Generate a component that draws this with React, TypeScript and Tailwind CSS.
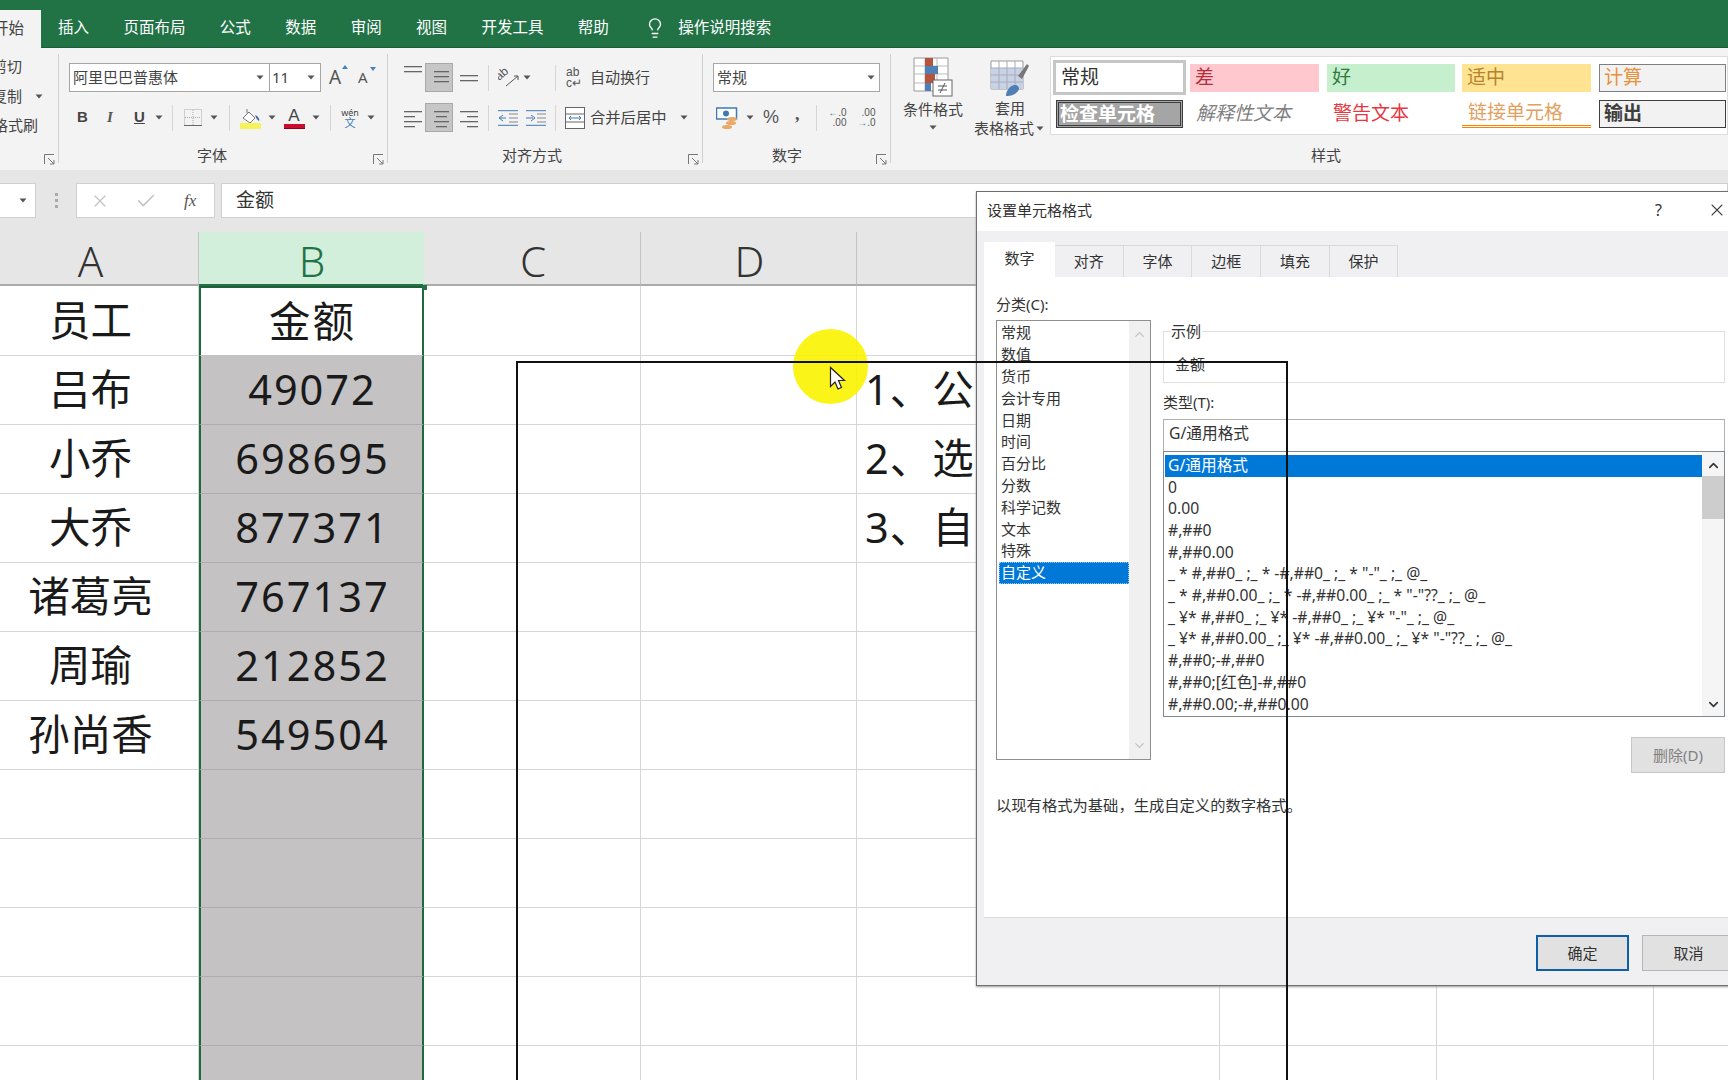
import React from 'react';
import { Lightbulb, ChevronUp, ChevronDown, X, Check } from 'lucide-react';

const TABS = ['插入', '页面布局', '公式', '数据', '审阅', '视图', '开发工具', '帮助'];
const CATEGORIES = ['常规', '数值', '货币', '会计专用', '日期', '时间', '百分比', '分数', '科学记数', '文本', '特殊', '自定义'];
const FORMATS = [
  'G/通用格式',
  '0',
  '0.00',
  '#,##0',
  '#,##0.00',
  '_ * #,##0_ ;_ * -#,##0_ ;_ * "-"_ ;_ @_',
  '_ * #,##0.00_ ;_ * -#,##0.00_ ;_ * "-"??_ ;_ @_',
  '_ ¥* #,##0_ ;_ ¥* -#,##0_ ;_ ¥* "-"_ ;_ @_',
  '_ ¥* #,##0.00_ ;_ ¥* -#,##0.00_ ;_ ¥* "-"??_ ;_ @_',
  '#,##0;-#,##0',
  '#,##0;[红色]-#,##0',
  '#,##0.00;-#,##0.00',
];
const DIALOG_TABS = ['对齐', '字体', '边框', '填充', '保护'];
const ROWS = [
  ['员工', '金额', ''],
  ['吕布', '49072', '1、公'],
  ['小乔', '698695', '2、选'],
  ['大乔', '877371', '3、自'],
  ['诸葛亮', '767137', ''],
  ['周瑜', '212852', ''],
  ['孙尚香', '549504', ''],
  ['', '', ''],
  ['', '', ''],
  ['', '', ''],
  ['', '', ''],
  ['', '', ''],
];

function Caret({ className = '' }: { className?: string }) {
  return (
    <svg width="8" height="5" viewBox="0 0 8 5" className={className}>
      <path d="M0.5 0.5h7L4 4.5z" fill="#555" />
    </svg>
  );
}

function Launcher() {
  return (
    <svg width="11" height="11" viewBox="0 0 11 11" className="absolute right-[3px] bottom-[5px]">
      <path d="M0.5 10V0.5H10M4 4l6 6M10 6v4H6" fill="none" stroke="#777" />
    </svg>
  );
}

function Sep({ h = 'h-[26px]' }: { h?: string }) {
  return <div className={`w-px bg-[#d6d6d6] ${h}`} />;
}

function Lines({ rows, y = 0 }: { rows: [number, number][]; y?: number }) {
  return (
    <svg width="20" height="20" viewBox="0 0 20 20">
      {rows.map((r, i) => (
        <rect key={i} x={r[0]} y={3 + y + i * 5} width={r[1] - r[0]} height="1.3" fill="#666" />
      ))}
    </svg>
  );
}

function AlignBox({ rows, active, y = 0 }: { rows: [number, number][]; active?: boolean; y?: number }) {
  return (
    <div className={active ? 'w-[28px] h-[29px] bg-[#c6c6c6] border border-[#a8a8a8] flex items-center justify-center' : 'w-[20px] h-[29px] flex items-center justify-center'}>
      <Lines rows={rows} y={y} />
    </div>
  );
}

function FontGroup() {
  return (
    <div className="relative w-[328px] h-full pt-[15px] pl-[10px]">
      <div className="flex items-center h-[29px]">
        <div className="w-[201px] h-[29px] bg-white border border-[#a6a6a6] flex items-center justify-between pl-[3px] pr-[5px] text-[15px]">
          <span>阿里巴巴普惠体</span>
          <Caret />
        </div>
        <div className="w-[51px] h-[29px] bg-white border border-l-0 border-[#a6a6a6] flex items-center justify-between pl-[2px] pr-[5px] text-[15px]">
          <span>11</span>
          <Caret />
        </div>
        <div className="ml-[8px] relative w-[20px] text-[19px] leading-none text-[#555]">
          A<span className="absolute left-[13px] -top-[3px] w-0 h-0 border-x-[3px] border-x-transparent border-b-[4px] border-b-[#4a7ebb]" />
        </div>
        <div className="ml-[9px] relative w-[20px] text-[15px] leading-none text-[#555]">
          A<span className="absolute left-[12px] -top-[3px] w-0 h-0 border-x-[3px] border-x-transparent border-t-[4px] border-t-[#4a7ebb]" />
        </div>
      </div>
      <div className="flex items-center h-[29px] mt-[11px] pl-[8px]">
        <span className="w-[30px] text-[15px] font-bold text-[#444] [font-family:'Liberation_Sans',sans-serif]">B</span>
        <span className="w-[27px] text-[15px] italic font-bold text-[#555] [font-family:'Liberation_Serif',serif]">I</span>
        <span className="w-[21px] text-[15px] font-bold underline text-[#444] [font-family:'Liberation_Sans',sans-serif]">U</span>
        <Caret />
        <div className="ml-[9px] mr-[11px]"><Sep /></div>
        <svg width="18" height="18" viewBox="0 0 18 18">
          <rect x="0.5" y="0.5" width="17" height="16" fill="none" stroke="#aaa" strokeDasharray="1 1" />
          <path d="M9 1v15M1 8.500h16" stroke="#aaa" strokeDasharray="1 1" />
          <path d="M0 16.500h18" stroke="#666" />
        </svg>
        <Caret className="ml-[8px]" />
        <div className="ml-[11px] mr-[10px]"><Sep /></div>
        <svg width="22" height="22" viewBox="0 0 22 22">
          <path d="M7 2v4M3 11l6-6 6 6-5 5z" fill="#fff" stroke="#777" />
          <path d="M15 8c3 1 5 4 4 6-2-1-3-3-4-6z" fill="#3f6fa8" />
          <rect x="0" y="16" width="21" height="6" fill="#f5f25a" />
        </svg>
        <Caret className="ml-[6px]" />
        <div className="ml-[7px] w-[22px] flex flex-col items-center">
          <span className="text-[17px] leading-[17px] text-[#444] [font-family:'Liberation_Sans',sans-serif]">A</span>
          <span className="w-[21px] h-[5px] bg-[#c8102e] border-b border-[#90001a]" />
        </div>
        <Caret className="ml-[7px]" />
        <div className="ml-[10px] mr-[8px]"><Sep /></div>
        <div className="w-[22px] flex flex-col items-center leading-none">
          <span className="text-[9px] text-[#444]">wén</span>
          <span className="text-[11px] text-[#3f79b5]">文</span>
        </div>
        <Caret className="ml-[6px]" />
      </div>
      <div className="absolute left-0 right-0 top-[96px] text-center text-[15px] pr-[22px]">字体</div>
      <Launcher />
    </div>
  );
}

function AlignGroup() {
  return (
    <div className="relative w-[314px] h-full pt-[15px] pl-[15px]">
      <div className="flex items-center h-[29px]">
        <div className="w-[20px] h-[29px] flex items-center -mt-[9px]"><Lines rows={[[1, 19], [1, 19]]} /></div>
        <div className="ml-[2px]"><AlignBox active rows={[[5, 20], [5, 20], [5, 20]]} /></div>
        <div className="ml-[6px] mt-[9px]"><Lines rows={[[1, 19], [1, 19]]} /></div>
        <div className="ml-[9px]"><Sep /></div>
        <svg width="22" height="22" viewBox="0 0 22 22" className="ml-[9px]">
          <text x="1" y="14" fontSize="12" fontFamily="Liberation Sans" fill="#555" transform="rotate(-40 1 14)">ab</text>
          <path d="M8 19L20 9M16 9h4v4" fill="none" stroke="#555" />
        </svg>
        <Caret className="ml-[3px]" />
        <div className="ml-[24px]"><Sep /></div>
        <span className="ml-[10px] w-[18px] flex flex-col text-[12px] leading-[11px] text-[#555] [font-family:'Liberation_Sans',sans-serif]">
          <span>ab</span>
          <span>c↵</span>
        </span>
        <span className="ml-[6px] text-[15px]">自动换行</span>
      </div>
      <div className="flex items-center h-[29px] mt-[11px]">
        <Lines rows={[[1, 19], [1, 12], [1, 19], [1, 12]]} />
        <div className="ml-[2px]"><AlignBox active rows={[[5, 20], [7, 18], [5, 20], [7, 18]]} /></div>
        <div className="ml-[6px]"><Lines rows={[[1, 19], [8, 19], [1, 19], [8, 19]]} /></div>
        <div className="ml-[9px]"><Sep /></div>
        <svg width="20" height="16" viewBox="0 0 20 16" className="ml-[9px]">
          <path d="M0 0.700h20M0 15.300h20" stroke="#3f79b5" />
          <path d="M1 8h7M5 5L1 8l4 3" fill="none" stroke="#3f79b5" />
          <path d="M11 4h9M11 8h9M11 12h9" stroke="#888" />
        </svg>
        <svg width="20" height="16" viewBox="0 0 20 16" className="ml-[8px]">
          <path d="M0 0.700h20M0 15.300h20" stroke="#3f79b5" />
          <path d="M0 8h7M5 5l4 3-4 3" fill="none" stroke="#3f79b5" />
          <path d="M11 4h9M11 8h9M11 12h9" stroke="#888" />
        </svg>
        <div className="ml-[9px]"><Sep /></div>
        <svg width="20" height="22" viewBox="0 0 20 22" className="ml-[9px]">
          <rect x="0.500" y="0.500" width="19" height="21" fill="#fff" stroke="#666" />
          <path d="M0 7h20M0 15h20" stroke="#666" />
          <path d="M4 11h12M6 9l-2 2 2 2M14 9l2 2-2 2" fill="none" stroke="#3f79b5" />
        </svg>
        <span className="ml-[5px] text-[15.300px]">合并后居中</span>
        <Caret className="ml-[13px]" />
      </div>
      <div className="absolute left-[114px] top-[96px] text-[15px]">对齐方式</div>
      <Launcher />
    </div>
  );
}

function NumberGroup() {
  return (
    <div className="relative w-[187px] h-full pt-[15px] pl-[10px]">
      <div className="w-[167px] h-[29px] bg-white border border-[#a6a6a6] flex items-center justify-between pl-[3px] pr-[4px] text-[15px]">
        <span>常规</span>
        <Caret />
      </div>
      <div className="flex items-center h-[29px] mt-[11px] pl-[3px]">
        <svg width="23" height="22" viewBox="0 0 23 22">
          <rect x="0.500" y="1" width="20" height="11" fill="#fff" stroke="#3f79b5" strokeWidth="1.500" />
          <circle cx="10" cy="6.500" r="3" fill="#3f79b5" />
          <ellipse cx="16" cy="12" rx="5" ry="2" fill="#e8a867" />
          <ellipse cx="15" cy="16" rx="5" ry="2" fill="#e8a867" />
          <ellipse cx="11" cy="20" rx="5" ry="2" fill="#e8a867" />
        </svg>
        <Caret className="ml-[7px]" />
        <span className="ml-[9px] w-[17px] text-[18px] text-[#555] [font-family:'Liberation_Sans',sans-serif]">%</span>
        <span className="ml-[15px] text-[18px] font-bold text-[#555] -mt-[6px] [font-family:'Liberation_Serif',serif]">,</span>
        <div className="ml-[16px]"><Sep /></div>
        <div className="ml-[9px] w-[21px] flex flex-col items-end text-[10px] leading-[10px] text-[#555] [font-family:'Liberation_Sans',sans-serif]">
          <span><span className="text-[#3f79b5]">←</span>.0</span>
          <span>.00</span>
        </div>
        <div className="ml-[8px] w-[21px] flex flex-col items-end text-[10px] leading-[10px] text-[#555] [font-family:'Liberation_Sans',sans-serif]">
          <span>.00</span>
          <span><span className="text-[#3f79b5]">→</span>.0</span>
        </div>
      </div>
      <div className="absolute left-[69px] top-[96px] text-[15px]">数字</div>
      <Launcher />
    </div>
  );
}

function CondIcon() {
  return (
    <svg width="40" height="40" viewBox="0 0 40 40">
      <path d="M1 1h34v33H1z" fill="#fff" stroke="#999" />
      <path d="M12 1v33M24 1v33M1 9h34M1 17h34M1 26h34" stroke="#bbb" />
      <rect x="12" y="1" width="8" height="8" fill="#b5533c" />
      <rect x="12" y="9" width="13" height="8" fill="#4f7fb5" />
      <rect x="12" y="17" width="10" height="9" fill="#b5533c" />
      <rect x="12" y="26" width="6" height="8" fill="#4f7fb5" />
      <rect x="20" y="23" width="19" height="16" fill="#fff" stroke="#666" />
      <path d="M25 29h9M25 33h9M32 26l-5 10" stroke="#555" />
    </svg>
  );
}

function TableIcon() {
  return (
    <svg width="40" height="38" viewBox="0 0 40 38">
      <path d="M1 1h32v28H1z" fill="#fff" stroke="#999" />
      <path d="M1 8h32v21H1z" fill="#c7d3e4" />
      <path d="M9 1v28M17 1v28M25 1v28M1 8h32M1 15h32M1 22h32" stroke="#aab" />
      <path d="M28 16l9-12 2 2-7 13z" fill="#777" />
      <path d="M16 36c0-6 5-12 10-11 3 1 4 4 2 6-3 4-7 5-12 5z" fill="#4f7fb5" />
    </svg>
  );
}

function StylesGallery() {
  return (
    <div className="w-[678px] h-[79px] bg-white border border-[#dcdcdc] grid grid-cols-[132px_136px_136px_136px_128px] grid-rows-[38px_38px] text-[19px] leading-none pl-[2px]">
      <div className="h-[35px] mt-[3px] w-[133px] border-[3px] border-[#c6c6c6] flex items-center pl-[5px] text-[#333]">常规</div>
      <div className="ml-[5px] w-[129px] h-[28px] mt-[7px] bg-[#ffc7ce] text-[#b2303c] flex items-center pl-[5px] pb-[1px]">差</div>
      <div className="w-[128px] ml-[6px] h-[28px] mt-[7px] bg-[#c6efce] text-[#2f7a3d] flex items-center pl-[5px] pb-[1px]">好</div>
      <div className="w-[129px] ml-[5px] h-[28px] mt-[7px] bg-[#fde392] text-[#b5842c] flex items-center pl-[5px] pb-[1px]">适中</div>
      <div className="w-[127px] ml-[6px] h-[28px] mt-[7px] bg-[#f2f2f2] border border-[#7f7f7f] text-[#e8903a] flex items-center pl-[4px] pb-[1px]">计算</div>
      <div className="ml-[3px] w-[127px] h-[28px] mt-[5px] bg-[#a5a5a5] border-[3px] border-double border-[#3f3f3f] text-white font-bold flex items-center pl-[1px]">检查单元格</div>
      <div className="ml-[5px] mt-[5px] h-[28px] flex items-center pl-[6px] italic text-[#7f7f7f] pb-[1px]">解释性文本</div>
      <div className="ml-[6px] mt-[5px] h-[28px] flex items-center pl-[6px] text-[#e8383f] pb-[1px]">警告文本</div>
      <div className="w-[129px] ml-[5px] mt-[5px] h-[28px] border-b-[3px] border-double border-[#ff8001] flex items-center pl-[6px] text-[#e2a060]">链接单元格</div>
      <div className="w-[127px] ml-[6px] mt-[5px] h-[28px] bg-[#f2f2f2] border border-[#3f3f3f] text-[#3f3f3f] font-bold flex items-center pl-[4px] pb-[1px]">输出</div>
    </div>
  );
}

function Ribbon() {
  return (
    <div className="h-[122px] bg-[#f3f3f3] flex items-start text-[#444] overflow-hidden">
      <div className="relative w-[58px] h-full pt-[4px] text-[15px] leading-[29.500px] overflow-hidden">
        <div className="-ml-[8px]">剪切</div>
        <div className="-ml-[8px] flex items-center"><span>复制</span><Caret className="ml-[13px]" /></div>
        <div className="-ml-[7px]">格式刷</div>
        <Launcher />
      </div>
      <div className="w-px h-[109px] mt-[6px] bg-[#d0d0d0]" />
      <FontGroup />
      <div className="w-px h-[109px] mt-[6px] bg-[#d0d0d0]" />
      <AlignGroup />
      <div className="w-px h-[109px] mt-[6px] bg-[#d0d0d0]" />
      <NumberGroup />
      <div className="w-px h-[109px] mt-[6px] bg-[#d0d0d0]" />
      <div className="relative w-[159px] h-full flex text-[15px] leading-[20px]">
        <div className="w-[84px] pt-[9px] flex flex-col items-center">
          <CondIcon />
          <span className="mt-[2px]">条件格式</span>
          <Caret className="mt-[6px]" />
        </div>
        <div className="w-[70px] pt-[12px] flex flex-col items-center">
          <TableIcon />
          <span className="">套用</span>
          <span className="whitespace-nowrap flex items-center -ml-[2px]">表格格式<Caret className="ml-[2px]" /></span>
        </div>
      </div>
      <div className="flex flex-col items-center mt-[8px]">
        <StylesGallery />
        <span className="mt-[9px] text-[15px] pr-[126px]">样式</span>
      </div>
    </div>
  );
}

function FormulaBar() {
  return (
    <div className="bg-[#e6e6e6] pt-[13px] pb-[14px] flex items-stretch h-[62px]">
      <div className="w-[36px] bg-white border border-l-0 border-[#cfcfcf] flex items-center justify-end pr-[8px]"><Caret /></div>
      <div className="w-[40px] flex flex-col items-center justify-center gap-[3px]">
        <span className="w-[3px] h-[3px] bg-[#aaa]" />
        <span className="w-[3px] h-[3px] bg-[#aaa]" />
        <span className="w-[3px] h-[3px] bg-[#aaa]" />
      </div>
      <div className="w-[139px] bg-white border border-[#cfcfcf] flex items-center pl-[13px]">
        <X size={20} strokeWidth={1.5} className="text-[#c4c4c4]" />
        <Check size={22} strokeWidth={1.8} className="ml-[25px] text-[#c4c4c4]" />
        <span className="ml-[27px] text-[17px] italic text-[#555] [font-family:'Liberation_Serif',serif]">fx</span>
      </div>
      <div className="ml-[6px] flex-1 bg-white border border-[#cfcfcf] flex items-center pl-[14px] text-[19px] text-[#333]">金额</div>
    </div>
  );
}

function ColHeader({ w, label, active, pad }: { w: string; label: string; active?: boolean; pad?: string }) {
  return (
    <div className={`${w} ${pad ?? ''} h-[54px] flex items-center justify-center pt-[6px] text-[42px] leading-none font-light border-r border-b-2 ${active ? 'bg-[#d2efdc] text-[#217346] border-b-[#217346] border-r-[#d2efdc]' : 'text-[#333] border-b-[#ababab] border-r-[#c2c2c2]'}`}>
      {label}
    </div>
  );
}

function Sheet() {
  return (
    <div className="flex-1 min-h-0 bg-white overflow-hidden">
      <div className="flex bg-[#e6e6e6]">
        <ColHeader w="w-[199px]" pad="pr-[17px]" label="A" />
        <ColHeader w="w-[225px]" pad="pl-[2px]" label="B" active />
        <ColHeader w="w-[217px]" pad="pl-[2px]" label="C" />
        <ColHeader w="w-[216px]" pad="pl-[2px]" label="D" />
        <ColHeader w="w-[363px]" label="" />
        <ColHeader w="w-[217px]" label="" />
        <ColHeader w="w-[217px]" label="" />
        <ColHeader w="w-[74px]" label="" />
      </div>
      {ROWS.map((r, i) => (
        <div key={i} className={`flex text-[41.500px] text-[#1a1a1a] leading-none ${i === 0 ? 'h-[70px]' : 'h-[69px]'}`}>
          <div className="w-[199px] pr-[17px] border-r border-b border-[#d6d6d6] flex items-center justify-center whitespace-nowrap">{r[0]}</div>
          <div className={`w-[225px] pl-[2px] border-x-2 border-x-[#1d6a3f] flex items-center justify-center tracking-[2px] border-b ${i === 0 ? 'bg-white border-t-2 border-t-[#1f5f3a] border-b-[#c3c3c3]' : 'bg-[#c4c2c3] border-b-[#adadad]'}`}>{r[1]}</div>
          <div className="w-[217px] border-r border-b border-[#d6d6d6]" />
          <div className="w-[216px] border-r border-b border-[#d6d6d6]" />
          <div className="w-[363px] border-r border-b border-[#d6d6d6] flex items-center pl-[8px] whitespace-nowrap tracking-[1px]">{r[2]}</div>
          <div className="w-[217px] border-r border-b border-[#d6d6d6]" />
          <div className="w-[217px] border-r border-b border-[#d6d6d6]" />
          <div className="w-[74px] border-b border-[#d6d6d6]" />
        </div>
      ))}
    </div>
  );
}

function FormatDialog() {
  return (
    <div className="absolute left-[976px] top-[191px] w-[770px] h-[795px] bg-[#f0f0f2] border border-[#6f6f6f] shadow-[0_1px_2px_#999] text-[15px] leading-none text-[#333] flex flex-col">
      <div className="h-[39px] bg-white flex items-center pl-[10px] pb-[3px] relative">
        <span>设置单元格格式</span>
        <span className="absolute left-[678px] text-[16px]">?</span>
        <X size={20} strokeWidth={1.3} className="absolute left-[730px] text-[#444]" />
      </div>
      <div className="flex items-end h-[46px] pl-[7px]">
        <div className="w-[71px] h-[35px] bg-white flex items-center justify-center pb-[3px]">数字</div>
        {DIALOG_TABS.map(t => (
          <div key={t} className="w-[68.700px] h-[32px] bg-[#f0f0f2] border-t border-r border-[#d9d9d9] flex items-center justify-center">{t}</div>
        ))}
      </div>
      <div className="ml-[7px] h-[641px] bg-white border-b border-[#dcdcdc] pl-[12px]">
        <div className="flex">
          <div className="w-[155px]">
            <div className="h-[20px] mt-[17px] flex items-center">分类(C):</div>
            <div className="h-[440px] mt-[6px] border border-[#8f8f8f] flex">
              <div className="w-[132px] pl-[2px] pt-[1px]">
                {CATEGORIES.map(c => (
                  <div key={c} className={`h-[21.800px] flex items-center pl-[2px] ${c === '自定义' ? 'bg-[#0078d7] text-white outline-1 outline-dotted outline-[#9cc9ee] -outline-offset-1' : ''}`}>{c}</div>
                ))}
              </div>
              <div className="flex-1 bg-[#f0f0f0] flex flex-col justify-between items-center py-[6px] text-[#c2c2c2]">
                <ChevronUp size={15} />
                <ChevronDown size={15} />
              </div>
            </div>
          </div>
          <div className="ml-[12px] w-[562px]">
            <div className="relative h-[52px] mt-[54px] border border-[#dfdfdf] flex items-center pl-[11px]">
              <span className="absolute left-[7px] -top-[10px] bg-white pr-[1px] h-[18px] flex items-center">示例</span>
              <span className="mt-[14px]">金额</span>
            </div>
            <div className="h-[20px] mt-[9px] flex items-center">类型(T):</div>
            <div className="h-[32px] mt-[7px] border border-[#b0b0b0] border-b-0 flex items-center pl-[5px] pb-[3px] text-[15.700px]">G/通用格式</div>
            <div className="h-[266px] border border-[#828790] flex overflow-hidden">
              <div className="w-[538px] pl-[1px] pt-[3px] text-[15.700px]">
                {FORMATS.map((f, i) => (
                  <div key={f} className={`h-[21.700px] flex items-center pl-[3px] whitespace-pre ${i === 0 ? 'bg-[#0078d7] text-white' : ''}`}>{f}</div>
                ))}
              </div>
              <div className="flex-1 bg-[#f5f5f5] flex flex-col items-center text-[#333] pt-[6px]">
                <ChevronUp size={15} strokeWidth={2.5} />
                <div className="w-full h-[43px] bg-[#cdcdcd] mt-[3px]" />
                <ChevronDown size={15} strokeWidth={2.5} className="mt-auto mb-[4px]" />
              </div>
            </div>
            <div className="flex justify-end mt-[20px]">
              <div className="w-[94px] h-[36px] bg-[#e1e1e1] border border-[#c6c6c6] text-[#808080] flex items-center justify-center">删除(D)</div>
            </div>
          </div>
        </div>
        <div className="h-[20px] mt-[23px] flex items-center text-[15.300px]">以现有格式为基础，生成自定义的数字格式。</div>
      </div>
      <div className="flex mt-[17px] ml-[559px]">
        <div className="w-[93px] h-[36px] bg-[#e1e1e1] border-2 border-[#0f5fa8] flex items-center justify-center">确定</div>
        <div className="ml-[13px] w-[93px] h-[36px] bg-[#e1e1e1] border border-[#b5b5b5] flex items-center justify-center">取消</div>
      </div>
    </div>
  );
}

export default function App() {
  return (
    <div className="relative w-[1728px] h-[1080px] overflow-hidden flex flex-col bg-white font-['Noto_Sans','Noto_Sans_CJK_SC',sans-serif]">
      <div className="h-[48px] bg-[#217346] border-b border-[#1a5c38] flex items-end text-white text-[15.500px] leading-none shrink-0">
        <div className="w-[41px] h-[38px] bg-[#f3f3f3] text-[#444] overflow-hidden flex items-center -mb-px">
          <span className="-ml-[7px] whitespace-nowrap">开始</span>
        </div>
        <div className="flex h-[38px] items-center gap-[34.400px] ml-[17px]">
          {TABS.map(t => <span key={t} className="whitespace-nowrap">{t}</span>)}
          <span className="flex items-center gap-[12px] ml-[1px]">
            <Lightbulb size={22} strokeWidth={1.5} />
            <span className="whitespace-nowrap">操作说明搜索</span>
          </span>
        </div>
      </div>
      <Ribbon />
      <FormulaBar />
      <Sheet />

      <FormatDialog />

      {/* fill handle of the selection */}
      <div className="absolute left-[422px] top-[285px] w-[5px] h-[5px] bg-[#217346]" />
      {/* recording highlight under the mouse */}
      <div className="absolute left-[793px] top-[329px] w-[75px] h-[75px] rounded-full bg-[#fbf300]/90" />
      {/* hand-drawn frame over the sheet and the dialog */}
      <div className="absolute left-[516px] top-[361px] w-[772px] h-[800px] border-2 border-[#111]" />
      <svg width="18" height="26" viewBox="0 0 18 26" className="absolute left-[829px] top-[366px]">
        <path d="M1.500 1.500v19l4.500-4.500 3 7 3.500-1.500-3-7h6z" fill="#fff" stroke="#222" strokeWidth="1.200" />
      </svg>
    </div>
  );
}
